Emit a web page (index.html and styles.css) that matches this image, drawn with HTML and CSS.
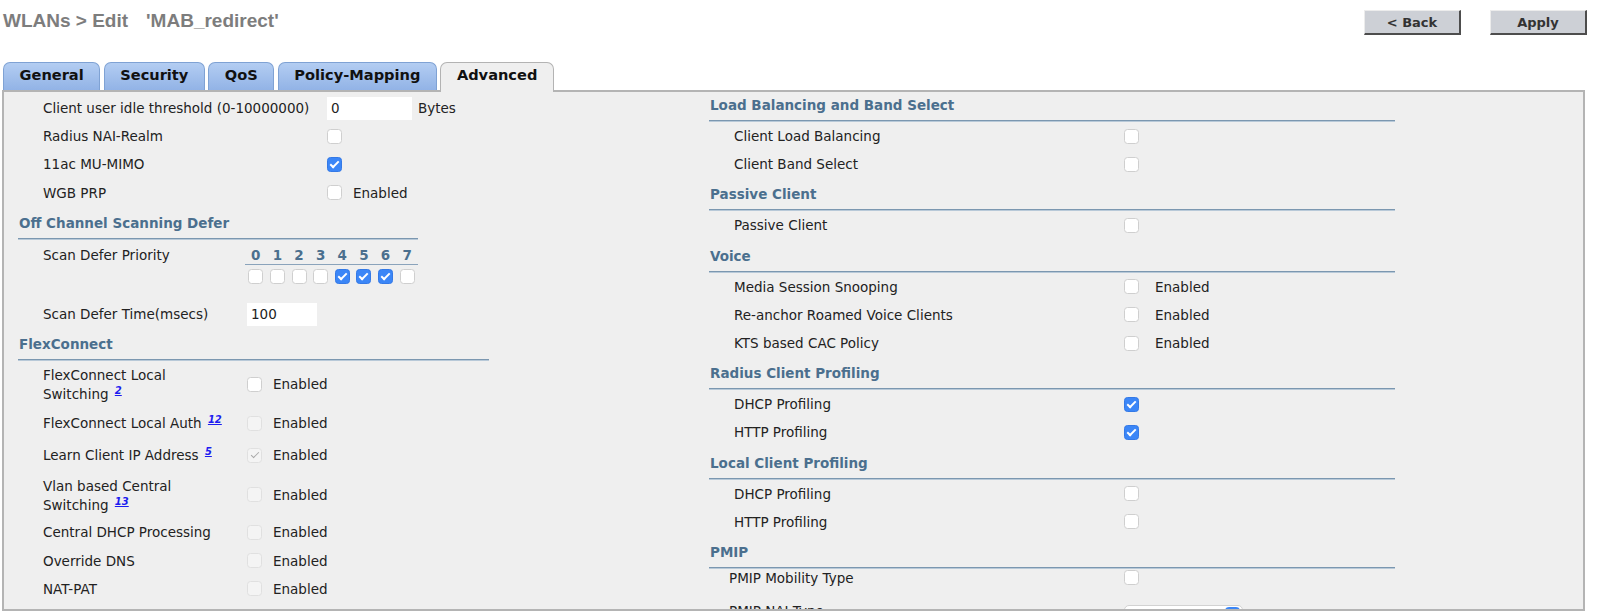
FILE: index.html
```html
<!DOCTYPE html>
<html lang="en">
<head>
<meta charset="utf-8">
<title>WLANs &gt; Edit 'MAB_redirect'</title>
<link rel="stylesheet" href="styles.css">
</head>
<body>
<div class="page">
  <header class="topbar">
    <h1 class="title">WLANs &gt; Edit<span class="wlan-name">'MAB_redirect'</span></h1>
    <div class="actions">
      <button class="btn">&lt; Back</button>
      <button class="btn">Apply</button>
    </div>
  </header>

  <nav class="tabs">
    <span class="tab">General</span>
    <span class="tab">Security</span>
    <span class="tab">QoS</span>
    <span class="tab">Policy-Mapping</span>
    <span class="tab active">Advanced</span>
  </nav>

  <div class="panel">
    <div class="col col-left">
      <div class="sec sec-top">
        <div class="row">
          <span class="lbl">Client user idle threshold (0-10000000)</span>
          <input class="txt txt-idle" type="text" value="0">
          <span class="unit">Bytes</span>
        </div>
        <div class="row"><span class="lbl">Radius NAI-Realm</span><span class="cb"></span></div>
        <div class="row"><span class="lbl">11ac MU-MIMO</span><span class="cb on"></span></div>
        <div class="row"><span class="lbl">WGB PRP</span><span class="cb"></span><span class="en">Enabled</span></div>
      </div>

      <div class="sec sec-scan">
        <div class="hdr">Off Channel Scanning Defer</div>
        <div class="row prio-row">
          <span class="lbl">Scan Defer Priority</span>
          <div class="prio">
            <div class="prio-nums"><span>0</span><span>1</span><span>2</span><span>3</span><span>4</span><span>5</span><span>6</span><span>7</span></div>
            <div class="prio-cbs">
              <span class="cb"></span><span class="cb"></span><span class="cb"></span><span class="cb"></span>
              <span class="cb on"></span><span class="cb on"></span><span class="cb on"></span><span class="cb"></span>
            </div>
          </div>
        </div>
        <div class="row">
          <span class="lbl">Scan Defer Time(msecs)</span>
          <input class="txt txt-time" type="text" value="100">
        </div>
      </div>

      <div class="sec sec-flex">
        <div class="hdr">FlexConnect</div>
        <div class="row tall">
          <span class="lbl two">FlexConnect Local<br>Switching <a class="fn">2</a></span>
          <span class="cb"></span><span class="en">Enabled</span>
        </div>
        <div class="row sup">
          <span class="lbl">FlexConnect Local Auth <a class="fn">12</a></span>
          <span class="cb dis"></span><span class="en">Enabled</span>
        </div>
        <div class="row sup">
          <span class="lbl">Learn Client IP Address <a class="fn">5</a></span>
          <span class="cb dis on"></span><span class="en">Enabled</span>
        </div>
        <div class="row tall tall-b">
          <span class="lbl two">Vlan based Central<br>Switching <a class="fn">13</a></span>
          <span class="cb dis"></span><span class="en">Enabled</span>
        </div>
        <div class="row"><span class="lbl">Central DHCP Processing</span><span class="cb dis"></span><span class="en">Enabled</span></div>
        <div class="row"><span class="lbl">Override DNS</span><span class="cb dis"></span><span class="en">Enabled</span></div>
        <div class="row"><span class="lbl">NAT-PAT</span><span class="cb dis"></span><span class="en">Enabled</span></div>
        <div class="row"><span class="lbl">Central Assoc</span><span class="cb dis"></span><span class="en">Enabled</span></div>
      </div>
    </div>

    <div class="col col-right">
      <div class="sec">
        <div class="hdr">Load Balancing and Band Select</div>
        <div class="row"><span class="lbl">Client Load Balancing</span><span class="cb"></span></div>
        <div class="row"><span class="lbl">Client Band Select</span><span class="cb"></span></div>
      </div>
      <div class="sec">
        <div class="hdr">Passive Client</div>
        <div class="row"><span class="lbl">Passive Client</span><span class="cb"></span></div>
      </div>
      <div class="sec">
        <div class="hdr">Voice</div>
        <div class="row"><span class="lbl">Media Session Snooping</span><span class="cb"></span><span class="en">Enabled</span></div>
        <div class="row"><span class="lbl">Re-anchor Roamed Voice Clients</span><span class="cb"></span><span class="en">Enabled</span></div>
        <div class="row"><span class="lbl">KTS based CAC Policy</span><span class="cb"></span><span class="en">Enabled</span></div>
      </div>
      <div class="sec">
        <div class="hdr">Radius Client Profiling</div>
        <div class="row"><span class="lbl">DHCP Profiling</span><span class="cb on"></span></div>
        <div class="row"><span class="lbl">HTTP Profiling</span><span class="cb on"></span></div>
      </div>
      <div class="sec">
        <div class="hdr">Local Client Profiling</div>
        <div class="row"><span class="lbl">DHCP Profiling</span><span class="cb"></span></div>
        <div class="row"><span class="lbl">HTTP Profiling</span><span class="cb"></span></div>
      </div>
      <div class="sec">
        <div class="hdr">PMIP</div>
        <div class="row pmip pmip-type"><span class="lbl">PMIP Mobility Type</span><span class="cb"></span></div>
        <div class="row pmip pmip-nai">
          <span class="lbl">PMIP NAI Type</span>
          <span class="sel">Hexadecimal<span class="sel-btn"><svg width="9" height="12" viewBox="0 0 9 12"><path d="M1.5 4.5 4.5 1.5 7.5 4.5M1.5 7.5 4.5 10.5 7.5 7.5" fill="none" stroke="#fff" stroke-width="1.6" stroke-linecap="round" stroke-linejoin="round"/></svg></span></span>
        </div>
      </div>
    </div>
  </div>
</div>
</body>
</html>
```

FILE: styles.css
```css
html, body {
  margin: 0;
  padding: 0;
  background: #ffffff;
}

body {
  font-family: "DejaVu Sans", Verdana, sans-serif;
  font-size: 13.5px;
  color: #222222;
}

.page {
  padding: 0 13px 0 2px;
}

/* ---------- top bar ---------- */
.topbar {
  display: flex;
  justify-content: space-between;
  align-items: flex-start;
  height: 62px;
  box-sizing: border-box;
  padding: 10px 0 0 1px;
}

.title {
  margin: 0;
  font: bold 19px/22px "Liberation Sans", Arial, sans-serif;
  color: #7d7d7d;
}

.wlan-name {
  margin-left: 18px;
}

.actions {
  display: flex;
  gap: 29px;
}

.btn {
  width: 97px;
  height: 25px;
  box-sizing: border-box;
  padding: 0;
  font: bold 13px "DejaVu Sans", Verdana, sans-serif;
  color: #333333;
  background: #cdd0d6;
  border-style: solid;
  border-width: 1px 2px 2px 1px;
  border-color: #ececec #4d4d4d #4d4d4d #ececec;
}

/* ---------- tabs ---------- */
.tabs {
  display: flex;
  align-items: flex-start;
  gap: 3.5px;
  height: 30px;
  margin-bottom: -2px;
  padding-left: 1px;
}

.tab {
  height: 28px;
  box-sizing: border-box;
  padding: 0 15.5px;
  border: 1px solid #7fa2d4;
  border-bottom: 0;
  border-radius: 7px 7px 0 0;
  background: linear-gradient(#b3cdf2, #92b3e6);
  font: bold 14.6px/24px "DejaVu Sans", Verdana, sans-serif;
  color: #111111;
  white-space: nowrap;
}

.tab.active {
  position: relative;
  z-index: 1;
  height: 30px;
  background: #efefef;
  border-color: #b3b3b3;
}

/* ---------- panel ---------- */
.panel {
  display: flex;
  gap: 220px;
  width: 1583px;
  height: 521px;
  box-sizing: border-box;
  border: 2px solid #b4b4b4;
  background: #efefef;
  padding-left: 14px;
  overflow: hidden;
}

.col-left {
  width: 471px;
  flex: none;
}

.col-right {
  width: 686px;
  flex: none;
}

.sec-top {
  padding-top: 2px;
}

.sec-scan {
  width: 400px;
}

.sec-flex {
  width: 471px;
}

.hdr {
  font-weight: bold;
  color: #4b6f8e;
  line-height: 18px;
  padding: 7px 0 6px 1px;
  border-bottom: 1px solid #7b97b0;
  box-shadow: 0 1px 0 #b8c9d8;
  margin-bottom: 1px;
  white-space: nowrap;
}

.col-right .sec:first-child .hdr {
  padding-top: 4px;
}

.row {
  display: flex;
  align-items: center;
  height: 28.2px;
  padding-left: 25px;
  white-space: nowrap;
}

.row.sup {
  height: 32px;
}

.row.tall {
  height: 46px;
}

.row.tall-b {
  height: 47px;
}

.lbl {
  flex: none;
  width: 204px;
  line-height: 18px;
}

.lbl.two {
  line-height: 19px;
  white-space: normal;
  margin-top: 2px;
}

.sec-top .lbl {
  width: 284px;
}

.col-right .lbl {
  width: 390px;
}

.row.pmip {
  padding-left: 20px;
}

.row.pmip .lbl {
  width: 395px;
}

.row.pmip-type {
  margin-top: -5px;
}

.row.pmip-nai {
  align-items: flex-start;
  padding-top: 13px;
}

.row.pmip-nai .lbl {
  margin-top: -3px;
}

.en {
  margin-left: 11px;
}

.col-right .en {
  margin-left: 16px;
}

.unit {
  margin-left: 6px;
}

.fn {
  font-size: 10px;
  font-weight: bold;
  font-style: italic;
  color: #1c1cf0;
  text-decoration: underline;
  vertical-align: 5px;
  line-height: 0;
  margin-left: 2px;
}

/* ---------- controls ---------- */
.txt {
  height: 23px;
  box-sizing: border-box;
  border: 0;
  outline: none;
  background: #ffffff;
  padding: 0 4px;
  font: 13.5px "DejaVu Sans", Verdana, sans-serif;
  color: #222222;
}

.txt-idle {
  width: 85px;
}

.txt-time {
  width: 70px;
}

.cb {
  flex: none;
  display: inline-flex;
  align-items: center;
  justify-content: center;
  width: 15px;
  height: 15px;
  box-sizing: border-box;
  border: 1px solid #cfcfcf;
  border-radius: 3.5px;
  background: #ffffff;
}

.cb.on {
  background: #3b86f7;
  border-color: #3479e6;
}

.cb.on::after {
  content: "";
  width: 3px;
  height: 7px;
  margin-top: -2px;
  border: solid #ffffff;
  border-width: 0 2px 2px 0;
  transform: rotate(45deg);
}

.cb.dis {
  background: #f4f4f4;
  border-color: #e0e0e0;
}

.cb.dis.on::after {
  border-color: #a8a8a8;
  border-width: 0 1.5px 1.5px 0;
}

.prio {
  width: 174px;
  margin-left: -2px;
}

.prio-nums {
  display: grid;
  grid-template-columns: repeat(8, 1fr);
  text-align: center;
  font-weight: bold;
  color: #4b6f8e;
  line-height: 18px;
  border-bottom: 1px solid #8aa3bb;
}

.prio-cbs {
  display: grid;
  grid-template-columns: repeat(8, 1fr);
  justify-items: center;
  padding-top: 4px;
}

.row.prio-row {
  height: 60.4px;
  box-sizing: border-box;
  align-items: flex-start;
  padding-top: 6px;
}

.sel {
  display: inline-flex;
  align-items: flex-start;
  justify-content: space-between;
  width: 119px;
  height: 22px;
  box-sizing: border-box;
  padding: 1px 2px 0 8px;
  border: 1px solid #d2d2d2;
  border-radius: 5px;
  background: #ffffff;
  font-size: 13px;
  line-height: 16px;
}

.sel-btn {
  display: inline-flex;
  align-items: center;
  justify-content: center;
  width: 15px;
  height: 16px;
  border-radius: 4px;
  background: #3b86f7;
}
```
